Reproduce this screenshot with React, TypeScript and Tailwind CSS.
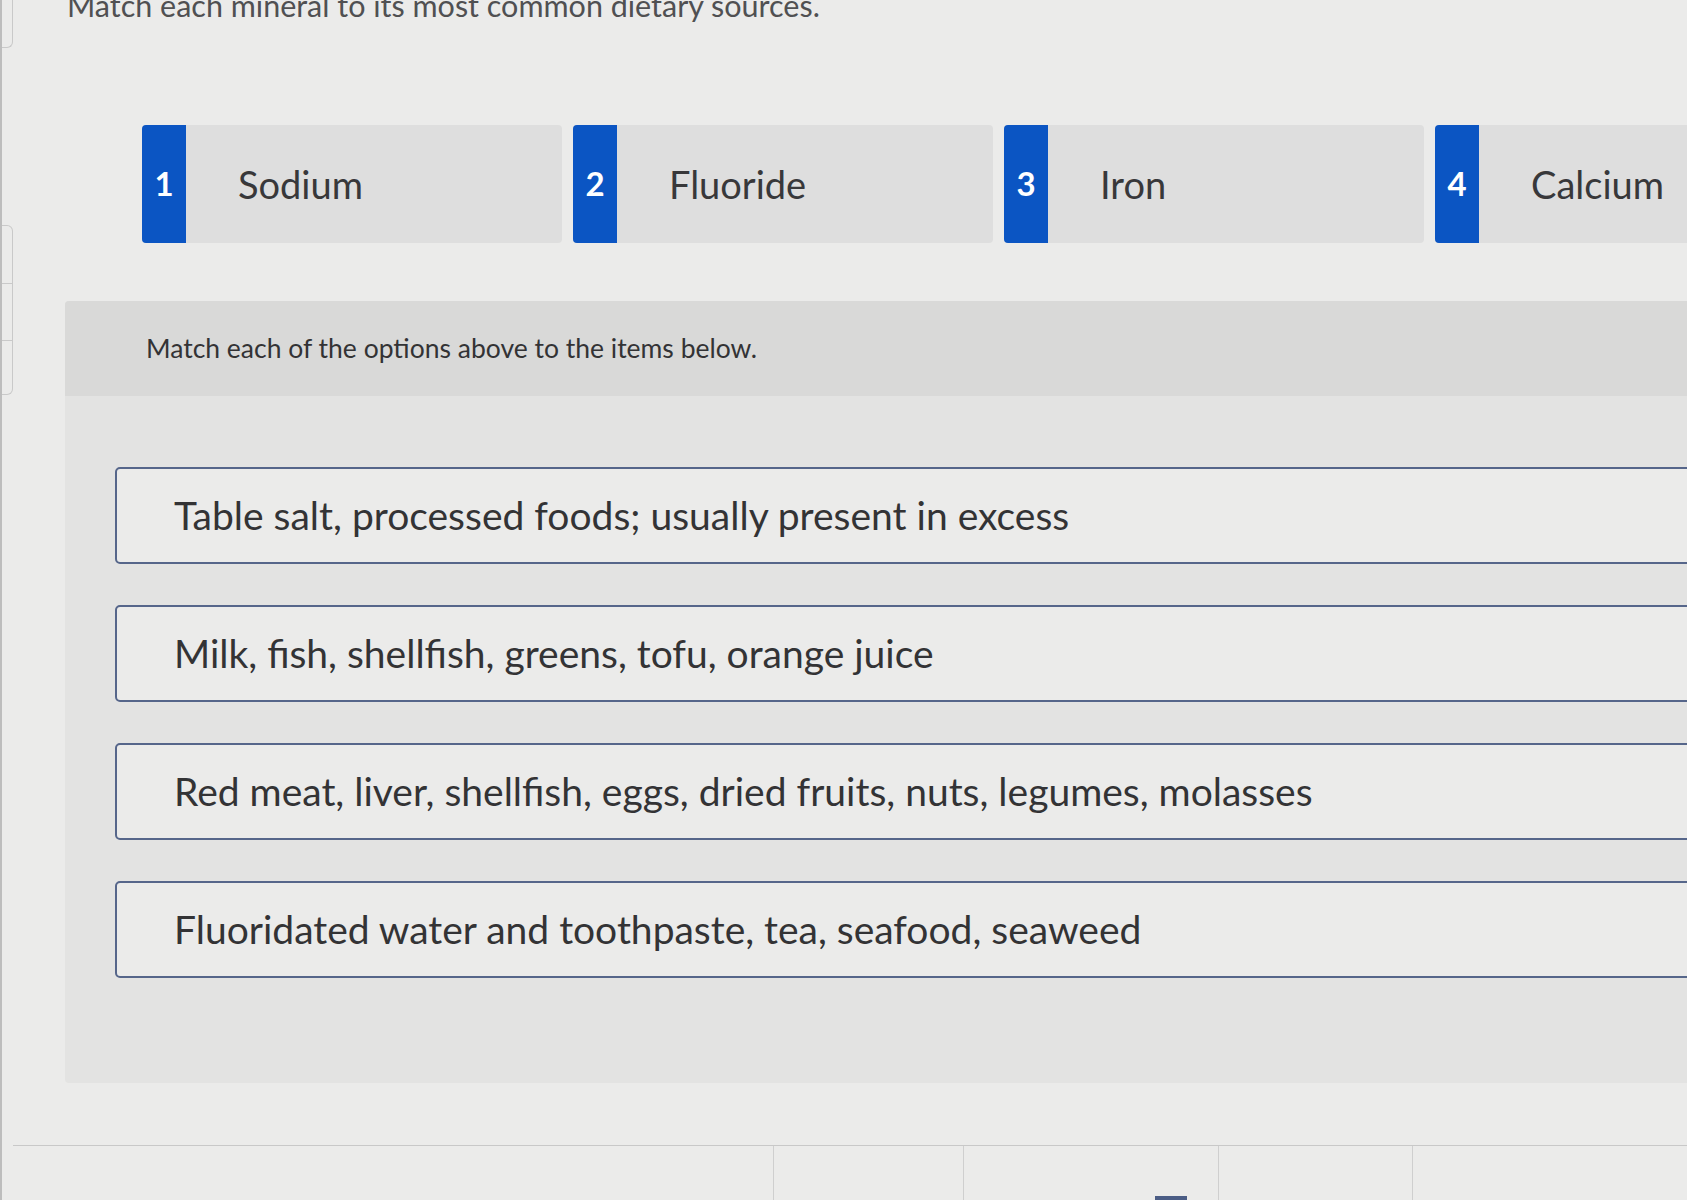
import React from "react";

const minerals = ["Sodium", "Fluoride", "Iron", "Calcium"];
const items = [
  "Table salt, processed foods; usually present in excess",
  "Milk, fish, shellfish, greens, tofu, orange juice",
  "Red meat, liver, shellfish, eggs, dried fruits, nuts, legumes, molasses",
  "Fluoridated water and toothpaste, tea, seafood, seaweed",
];

export default function App() {
  return (
    <div
      className="w-[1687px] h-[1200px] overflow-hidden bg-[#ebebea] flex flex-row text-[#3a3a3c]"
      style={{ fontFamily: "Lato, 'Open Sans', sans-serif" }}
    >
      {/* left edge strip (partially visible sidebar) */}
      <div className="w-[13px] shrink-0 h-full border-l-2 border-[#bdbdbd] flex flex-col">
        <div className="h-[48px] border-r border-b border-[#c9c9c9] rounded-br-[6px]" />
        <div className="h-[177px]" />
        <div className="h-[170px] border-r border-t border-b border-[#c9c9c9] rounded-r-[6px] flex flex-col">
          <div className="h-[58px] border-b border-[#c9c9c9]" />
          <div className="h-[57px] border-b border-[#c9c9c9]" />
        </div>
      </div>

      {/* main */}
      <div className="flex-1 flex flex-col min-w-0">
        <div className="pl-[54px] -mt-[10px] text-[30.5px] leading-[30px] text-[#505052] whitespace-nowrap">
          Match each mineral to its most common dietary sources.
        </div>

        {/* chips */}
        <div className="flex flex-row gap-[11px] pl-[129px] mt-[105px] whitespace-nowrap">
          {minerals.map((m, i) => (
            <div key={m} className="w-[420px] h-[118px] shrink-0 flex flex-row rounded-[4px] bg-[#dedede]">
              <div className="w-[44px] h-full rounded-l-[4px] bg-[#0b55c3] flex items-center justify-center text-white text-[33px] font-bold">
                {i + 1}
              </div>
              <div className="pl-[52px] flex items-center text-[38px] text-[#38383a]">{m}</div>
            </div>
          ))}
        </div>

        {/* panel */}
        <div className="ml-[52px] mt-[58px] w-[1700px] shrink-0 bg-[#e3e3e2] rounded-[4px]">
          <div className="h-[95px] bg-[#d9d9d8] rounded-t-[4px] flex items-center pl-[81px] text-[26.5px] text-[#333335]">
            Match each of the options above to the items below.
          </div>
          <div className="pl-[50px] pt-[71px] pb-[105px] flex flex-col gap-[41px]">
            {items.map((t) => (
              <div
                key={t}
                className="h-[97px] border-2 border-[#56668a] rounded-[5px] bg-[#ebebea] flex items-center pl-[57px] text-[39px] text-[#333335] whitespace-nowrap"
              >
                {t}
              </div>
            ))}
          </div>
        </div>

        {/* bottom toolbar */}
        <div className="mt-[62px] flex-1 border-t border-[#c8c8c8] flex flex-row">
          <div className="w-[761px] border-r border-[#cfcfcf]" />
          <div className="w-[190px] border-r border-[#cfcfcf]" />
          <div className="w-[255px] border-r border-[#cfcfcf] flex items-end pl-[191px]">
            <div className="w-[32px] h-[4px] bg-[#4b5d85]" />
          </div>
          <div className="w-[194px] border-r border-[#cfcfcf]" />
          <div className="flex-1" />
        </div>
      </div>
    </div>
  );
}
